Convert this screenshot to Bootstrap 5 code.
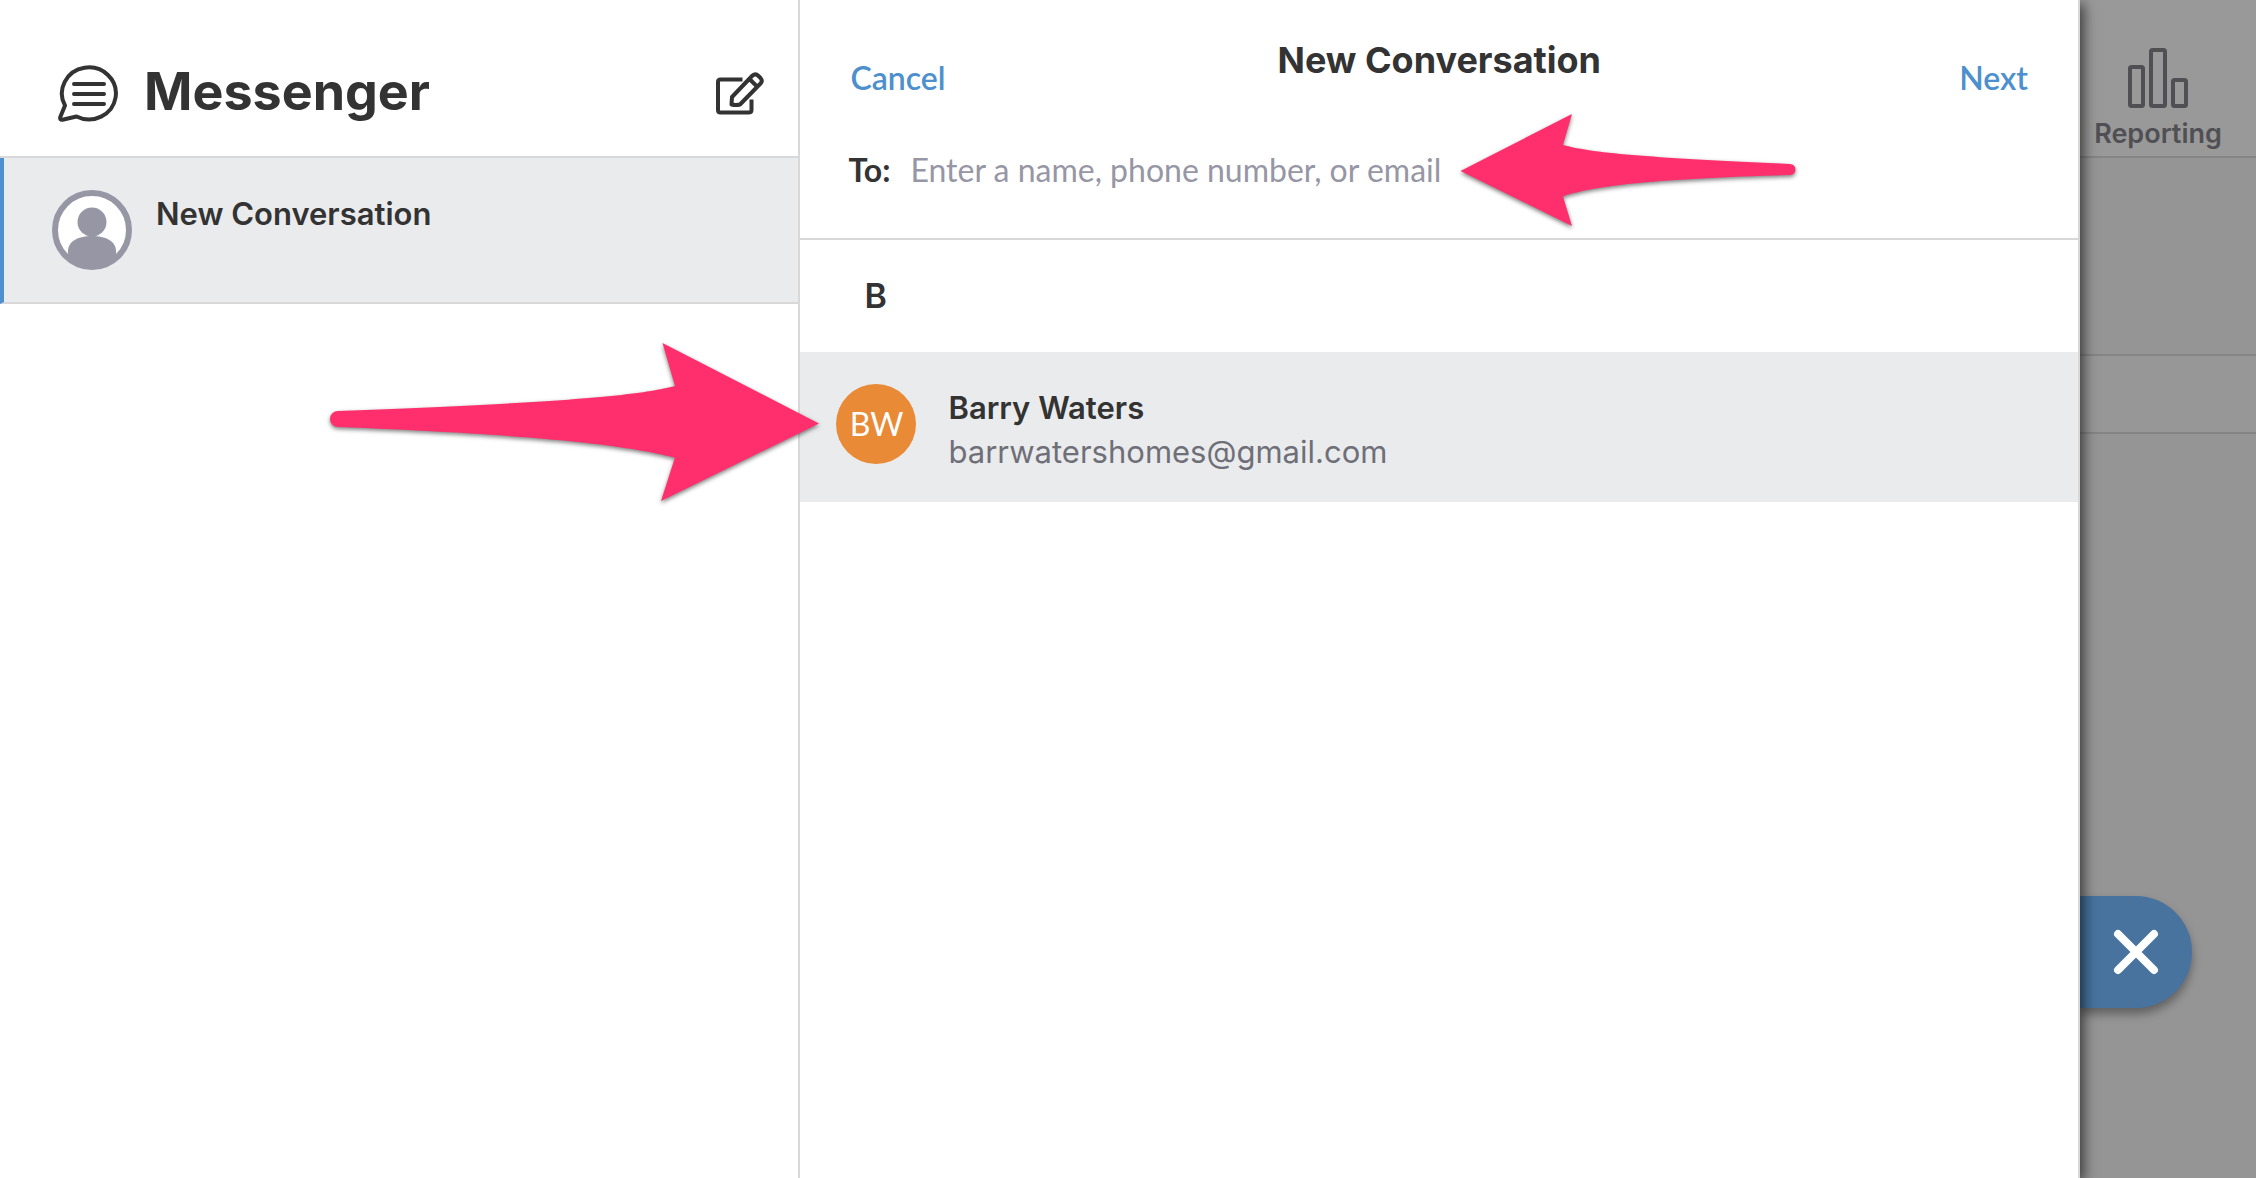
<!DOCTYPE html>
<html lang="en">
<head>
<meta charset="utf-8">
<meta name="viewport" content="width=device-width, initial-scale=1">
<title>Messenger</title>
<link href="https://cdn.jsdelivr.net/npm/bootstrap@5.3.0/dist/css/bootstrap.min.css" rel="stylesheet">
<style>
  :root { --ink: #333; --line: #d8d8d8; --link: #4d90cd; --wash: #eaebed; --muted: #9696a5; }
  body { font-family: Lato, "Liberation Sans", sans-serif; font-size: 32px; line-height: 40px; color: var(--ink); background: #fff; }
  .inter { font-family: Inter, "Liberation Sans", sans-serif; font-size: 31px; }
  svg { display: block; flex: none; }

  .drawer { z-index: 2; box-shadow: 4px 4px 12px rgba(0, 0, 0, .6); }
  .threads { flex: 5 1 0; border-right: 2px solid var(--line); }
  .compose { flex: 8 1 0; border-right: 2px solid var(--line); }

  .threads-head { height: 158px; padding: 28px 32px 0 56px; border-bottom: 2px solid var(--line); }
  .threads-head h1 { font: 700 52px/64px Inter, "Liberation Sans", sans-serif; margin-left: 24px; }
  .thread { height: 146px; padding: 32px 48px; gap: 24px; color: var(--ink); background: var(--wash); border-left: 4px solid var(--link); border-bottom: 2px solid var(--line); }
  .thread .label { font-weight: 600; line-height: 48px; }

  .compose-head { height: 240px; padding: 40px 48px 0; border-bottom: 2px solid var(--line); }
  .compose-head h2 { font: 700 36px/40px Inter, "Liberation Sans", sans-serif; }
  .text-btn { font-size: 32px; font-weight: 600; color: var(--link); border: 0; background: none; padding: 0 2px; margin-top: 18px; line-height: 40px; }
  .to-row { margin-top: 52px; gap: 20px; }
  .to-row label { font-weight: 700; }
  .to-row input { border: 0; outline: 0; padding: 0; background: none; color: var(--ink); line-height: 40px; }
  .to-row input::placeholder { color: var(--muted); opacity: 1; }

  .letter { height: 112px; padding: 0 64px; font: 600 34px/40px Inter, "Liberation Sans", sans-serif; }
  .contact { height: 150px; padding: 32px 36px 0; gap: 32px; color: var(--ink); background: var(--wash); }
  .initials { width: 80px; height: 80px; flex: none; color: #fff; background: #e98a37; }
  .contact .inter { line-height: 44px; padding-top: 2px; }
  .contact .who { font-weight: 600; }
  .contact .mail { color: #6f6f78; }

  .behind { flex: 0 0 176px; background: #959595; }
  .report { height: 158px; padding-top: 48px; padding-right: 20px; color: #505054; background: #999; border-bottom: 2px solid #858585; }
  .report .caption { font: 600 27px/32px Inter, "Liberation Sans", sans-serif; margin-top: 10px; }
  .blank-a { height: 198px; border-bottom: 2px solid #858585; }
  .blank-b { height: 78px; background: #979797; border-bottom: 2px solid #858585; }
  .close-tab { bottom: 170px; left: 0; width: 112px; height: 112px; padding: 0; border: 0; border-radius: 0 56px 56px 0; background: #47739e; box-shadow: 0 6px 10px rgba(0, 0, 0, .35); }

  .pointer { z-index: 3; pointer-events: none; filter: drop-shadow(0 2px 2px rgba(0, 0, 0, .5)); }
  .pointer-to { left: 660px; top: 112px; }
  .pointer-contact { right: -24px; top: 340px; }
</style>
<script src="https://cdn.jsdelivr.net/npm/bootstrap@5.3.0/dist/js/bootstrap.bundle.min.js"></script>
</head>
<body>
<div class="d-flex min-vh-100 overflow-hidden">
  <div class="drawer d-flex flex-grow-1 bg-white position-relative">

    <aside class="threads position-relative">
      <header class="threads-head d-flex align-items-center">
        <svg width="64" height="64" viewBox="56 60 64 64" fill="none" stroke="#333" stroke-width="4" stroke-linecap="round" stroke-linejoin="round" aria-hidden="true">
          <path d="M64.500 105.500A27 26 0 1 1 76 116.500L62.500 119.700Q59.500 120 60.300 117Z" stroke="none"/>
          <path d="M65 105.500A27 26 0 1 1 76.500 116.500L62.500 119.700Q59.500 120 60.300 117Z"/>
          <path d="M74 84h30M74 94h30M74 104h30"/>
        </svg>
        <h1 class="mb-0 me-auto">Messenger</h1>
        <button type="button" class="btn p-0 border-0" aria-label="New message">
          <svg width="50" height="48" viewBox="716 68 50 48" fill="none" stroke="#333" stroke-width="4" stroke-linejoin="round" aria-hidden="true">
            <path d="M742.500 79.500H720.500Q718 79.500 718 82V110Q718 112.500 720.500 112.500H748.500Q751.500 112.500 751.500 110V99.500"/>
            <path d="M731.500 104.500L732 97L752.500 75.500Q755.500 73 758.500 76L760.500 78Q763 81 760.500 83.500L740 104.500Q736 105.500 731.500 104.500ZM750 79.500L757.500 87"/>
          </svg>
        </button>
      </header>
      <a href="#" class="thread d-flex align-items-start text-decoration-none">
        <svg width="80" height="80" viewBox="0 0 80 80" aria-hidden="true">
          <circle cx="40" cy="40" r="37" fill="#fff"/>
          <g fill="#9696a5">
            <circle cx="40" cy="32" r="14.500"/>
            <path d="M16 66V61C16 51 27 46 40 46S64 51 64 61V66Q54 78 40 78T16 66Z"/>
          </g>
          <circle cx="40" cy="40" r="37" fill="none" stroke="#9696a5" stroke-width="6"/>
        </svg>
        <span class="label inter">New Conversation</span>
      </a>
      <svg class="pointer pointer-contact position-absolute" width="500" height="166" viewBox="322 340 500 166" aria-hidden="true">
        <path fill="#ff2f6d" d="M819 423.500L662.500 343L675 386C635 396 570 402 338 411A8 8 0 0 0 338 427C570 436 635 448 675 457.500L661 501Z"/>
      </svg>
    </aside>

    <main class="compose position-relative">
      <header class="compose-head">
        <div class="d-flex justify-content-between align-items-start">
          <div class="col"><button type="button" class="text-btn">Cancel</button></div>
          <h2 class="mb-0">New Conversation</h2>
          <div class="col text-end"><button type="button" class="text-btn">Next</button></div>
        </div>
        <div class="to-row d-flex align-items-center">
          <label for="to">To:</label>
          <input id="to" type="text" class="flex-grow-1" placeholder="Enter a name, phone number, or email">
        </div>
      </header>
      <div class="letter d-flex align-items-center">B</div>
      <a href="#" class="contact d-flex align-items-start text-decoration-none">
        <span class="initials rounded-circle d-flex align-items-center justify-content-center">BW</span>
        <span class="inter d-flex flex-column">
          <span class="who">Barry Waters</span>
          <span class="mail">barrwatershomes@gmail.com</span>
        </span>
      </a>
      <svg class="pointer pointer-to position-absolute" width="340" height="120" viewBox="1460 112 340 120" aria-hidden="true">
        <path fill="#ff2f6d" d="M1460.500 171L1572 114L1563 145C1596 154 1660 158 1790 164A5.500 5.500 0 0 1 1790 175C1660 179 1596 185 1563 196.500L1572 226Z"/>
      </svg>
    </main>
  </div>

  <div class="behind position-relative">
    <div class="report d-flex flex-column align-items-center">
      <svg width="60" height="60" viewBox="0 0 60 60" fill="none" stroke="#505054" stroke-width="4" aria-hidden="true">
        <rect x="2" y="19" width="13" height="39" rx="1.500"/>
        <rect x="23" y="2" width="14" height="56" rx="1.500"/>
        <rect x="45" y="32" width="13" height="26" rx="1.500"/>
      </svg>
      <span class="caption">Reporting</span>
    </div>
    <div class="blank-a"></div>
    <div class="blank-b"></div>
    <button type="button" class="close-tab position-absolute d-flex align-items-center justify-content-center" aria-label="Close messenger">
      <svg width="48" height="48" viewBox="0 0 48 48" stroke="#fff" stroke-width="8" stroke-linecap="round" aria-hidden="true"><path d="M6 6L42 42M42 6L6 42"/></svg>
    </button>
  </div>
</div>
</body>
</html>
